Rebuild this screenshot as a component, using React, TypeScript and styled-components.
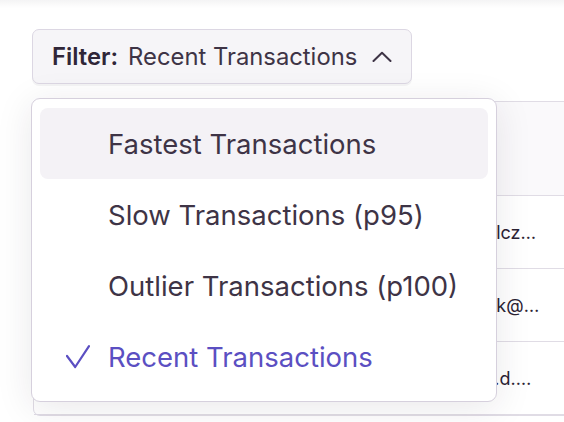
import React from "react";
import styled, { createGlobalStyle } from "styled-components";

const GlobalStyle = createGlobalStyle`
  html, body { margin: 0; padding: 0; background: #ffffff; }
  body { font-family: Inter, "Noto Sans", "Liberation Sans", sans-serif; color: #3e3446; }
  * { box-sizing: border-box; }
`;

const Page = styled.div`
  position: relative;
  height: 422px;
  overflow: hidden;
  padding: 29px 0 0 32px;
  display: flex;
  flex-direction: column;
  align-items: flex-start;
  background: #ffffff;
  &::before {
    content: "";
    position: absolute;
    left: 0;
    right: 0;
    top: 0;
    height: 8px;
    background: linear-gradient(rgba(43, 34, 51, 0.05), rgba(43, 34, 51, 0));
  }
`;

const FilterWrap = styled.div`
  position: relative;
  z-index: 2;
`;

const FilterButton = styled.button`
  display: inline-flex;
  align-items: center;
  height: 55px;
  padding: 0 19px;
  border: 1px solid #dcd7e3;
  border-radius: 7px;
  background: #f6f5f8;
  box-shadow: 0 2px 0 rgba(43, 34, 51, 0.05);
  font-family: inherit;
  font-size: 23.8px;
  color: #3e3446;
  cursor: pointer;
`;

const FilterLabel = styled.span`
  font-weight: 600;
  color: #2f2638;
  margin-right: 10px;
`;

const Chevron = styled.svg`
  width: 20px;
  height: 11px;
  margin-left: 15px;
`;

const Menu = styled.div`
  position: absolute;
  top: 69px;
  left: -1px;
  width: 466px;
  padding: 9px 8px;
  border: 1px solid #d6d0dd;
  border-radius: 9px;
  background: #ffffff;
  box-shadow: 0 6px 36px rgba(43, 34, 51, 0.1);
`;

const MenuItem = styled.div<{ $active?: boolean; $selected?: boolean }>`
  display: flex;
  align-items: center;
  height: 71px;
  padding-left: 26px;
  border-radius: 8px;
  font-size: 27.5px;
  color: ${(p) => (p.$selected ? "#5b4fc2" : "#3e3446")};
  background: ${(p) => (p.$active ? "#f4f2f6" : "transparent")};
  white-space: nowrap;
`;

const CheckSlot = styled.span`
  display: inline-flex;
  width: 24px;
  height: 24px;
  margin-right: 18px;
`;

const Table = styled.div`
  margin-top: 17px;
  margin-left: 1px;
  width: 800px;
  flex-shrink: 0;
  border: 1px solid #e0dce5;
  border-radius: 7px;
  display: grid;
  grid-template-columns: 300px 240px 1fr;
  font-size: 18px;
  color: #2b2233;
`;

const HeadCell = styled.div`
  height: 94px;
  background: #faf9fb;
  border-bottom: 1px solid #e0dce5;
  padding: 0 27px;
  display: flex;
  align-items: center;
  font-weight: 600;
  color: #80708f;
  font-size: 16px;
  text-transform: uppercase;
`;

const Cell = styled.div`
  height: 73px;
  border-bottom: 1px solid #e0dce5;
  padding: 0 30px 0 27px;
  display: flex;
  align-items: center;
  min-width: 0;
`;

const CellText = styled.span`
  white-space: nowrap;
  overflow: hidden;
  text-overflow: ellipsis;
  min-width: 0;
`;

const options = [
  "Fastest Transactions",
  "Slow Transactions (p95)",
  "Outlier Transactions (p100)",
  "Recent Transactions",
];

const rows = [
  { id: "a3f9c1e2", user: "wojciech.i.kowalczyk@sentry.io", dur: "412.51ms" },
  { id: "7bd20e4f", user: "annamara.nowak@example.com", dur: "318.07ms" },
  { id: "e51c8a90", user: "fredericksmann.d.morgan@mail.com", dur: "287.64ms" },
];

export default function App() {
  const selected = "Recent Transactions";
  const hovered = "Fastest Transactions";
  return (
    <>
      <GlobalStyle />
      <Page>
        <FilterWrap>
          <FilterButton>
            <FilterLabel>Filter:</FilterLabel>
            <span>Recent Transactions</span>
            <Chevron viewBox="0 0 20 11" fill="none">
              <polyline
                points="1.5,10 10,1.8 18.5,10"
                stroke="#3e3446"
                strokeWidth="2"
                strokeLinecap="round"
                strokeLinejoin="round"
              />
            </Chevron>
          </FilterButton>
          <Menu>
            {options.map((o) => (
              <MenuItem key={o} $active={o === hovered} $selected={o === selected}>
                <CheckSlot>
                  {o === selected && (
                    <svg width="24" height="24" viewBox="0 0 24 24" fill="none">
                      <polyline
                        points="1,11 9.2,22 23,1.2"
                        stroke="#5b4fc2"
                        strokeWidth="2.2"
                        strokeLinecap="round"
                        strokeLinejoin="round"
                      />
                    </svg>
                  )}
                </CheckSlot>
                {o}
              </MenuItem>
            ))}
          </Menu>
        </FilterWrap>
        <Table>
          <HeadCell>Event ID</HeadCell>
          <HeadCell>User</HeadCell>
          <HeadCell>Duration</HeadCell>
          {rows.map((r) => (
            <React.Fragment key={r.id}>
              <Cell>
                <CellText>{r.id}</CellText>
              </Cell>
              <Cell>
                <CellText>{r.user}</CellText>
              </Cell>
              <Cell>
                <CellText>{r.dur}</CellText>
              </Cell>
            </React.Fragment>
          ))}
        </Table>
      </Page>
    </>
  );
}
